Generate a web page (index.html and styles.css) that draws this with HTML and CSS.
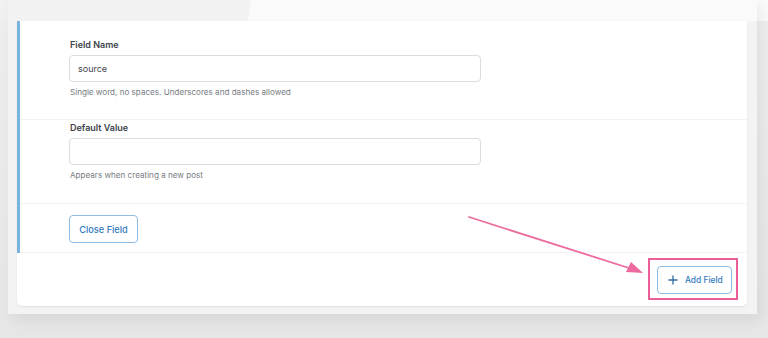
FILE: index.html
```html
<!DOCTYPE html>
<html>
<head>
<meta charset="utf-8">
<link rel="stylesheet" href="styles.css">
</head>
<body>
<div class="frame">
  <div class="card">
    <div class="panel">
      <div class="section s1">
        <div class="label">Field Name</div>
        <div class="input">source</div>
        <div class="help">Single word, no spaces. Underscores and dashes allowed</div>
      </div>
      <div class="section s2">
        <div class="label">Default Value</div>
        <div class="input"></div>
        <div class="help">Appears when creating a new post</div>
      </div>
      <div class="section s3">
        <button class="btn close-btn">Close Field</button>
      </div>
    </div>
    <div class="footer">
      <div class="highlight">
        <button class="btn add-btn"><svg class="plus" width="10" height="10" viewBox="0 0 10 10"><path d="M5 0.5V9.5M0.5 5H9.5" stroke="#2f6ea6" stroke-width="1.3" fill="none"/></svg><span>Add Field</span></button>
      </div>
    </div>
  </div>
</div>
<svg class="arrow" width="768" height="338" viewBox="0 0 768 338">
  <line x1="469" y1="217" x2="632" y2="269" stroke="#ec6a9d" stroke-width="1.8" stroke-linecap="round"/>
  <polygon points="643,273 626,272 631,262" fill="#ec6a9d"/>
</svg>
</body>
</html>
```
FILE: styles.css
```css
html, body {
  margin: 0;
  padding: 0;
}
body {
  width: 768px;
  height: 338px;
  overflow: hidden;
  position: relative;
  font-family: Inter, "Liberation Sans", sans-serif;
  background:
    linear-gradient(100deg, #f1f1f2 0 33.3%, #fafafa 33.3%) no-repeat 0 0 / 100% 21px,
    linear-gradient(#efefef, #e6e6e6);
}
.frame {
  margin-left: 8px;
  width: 749px;
  box-sizing: border-box;
  padding: 21px 10px 8px 9px;
  background: linear-gradient(100deg, #f2f2f3 0 32.3%, #fafafa 32.3%) no-repeat 0 0 / 100% 21px, #f3f3f4;
  box-shadow: 4px 6px 14px rgba(0,0,0,0.07);
}
.card {
  background: #fff;
  border-radius: 0 0 5px 5px;
  box-shadow: 0 1px 2px rgba(0,0,0,0.08);
}
.panel {
  border-left: 3px solid #7bb3df;
}
.section {
  padding-left: 49px;
  border-bottom: 1px solid #f3f3f4;
}
.s1 {
  padding-top: 18px;
  padding-bottom: 21px;
}
.s2 {
  padding-top: 2px;
  padding-bottom: 22px;
}
.s3 {
  padding-top: 11px;
  padding-bottom: 9px;
}
.label {
  font-size: 9px;
  font-weight: 600;
  line-height: 12px;
  color: #3c434a;
  margin-left: 1px;
  margin-bottom: 4px;
}
.input {
  width: 412px;
  height: 27px;
  box-sizing: border-box;
  border: 1px solid #dcdcde;
  border-radius: 4px;
  padding-left: 8px;
  font-size: 9px;
  line-height: 25px;
  color: #3c434a;
}
.help {
  margin-top: 4px;
  margin-left: 1px;
  font-size: 8.1px;
  line-height: 12px;
  color: #787c82;
}
.btn {
  font-family: Inter, "Liberation Sans", sans-serif;
  background: #fff;
  border: 1px solid #8dbde5;
  border-radius: 4px;
  color: #2f78bd;
  font-weight: 500;
  cursor: pointer;
}
.close-btn {
  display: block;
  width: 69px;
  height: 28px;
  padding: 0;
  font-size: 9.2px;
}
.footer {
  display: flex;
  justify-content: flex-end;
  padding: 5px 9px 6px 0;
}
.highlight {
  border: 2px solid #ea5f98;
  padding: 6px 4px 4px 7px;
}
.add-btn {
  display: flex;
  align-items: center;
  width: 75px;
  height: 28px;
  padding: 0 0 0 10px;
  font-size: 8.4px;
  gap: 7px;
}
.plus {
  display: block;
}
.arrow {
  position: absolute;
  left: 0;
  top: 0;
  pointer-events: none;
}
```
